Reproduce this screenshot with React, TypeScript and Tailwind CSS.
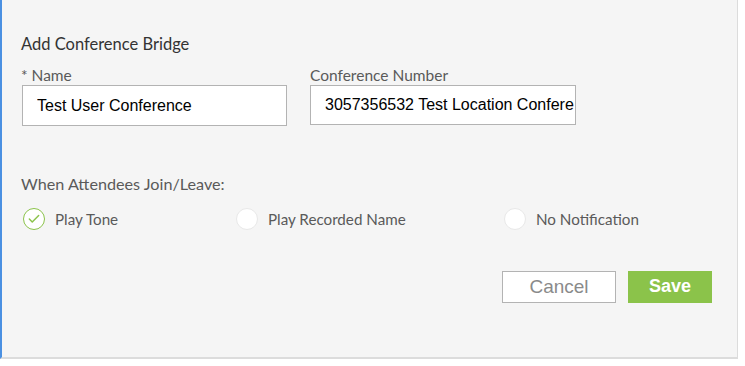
import { Check } from "lucide-react";

// ─── Radio option ─────────────────────────────────────────────

function RadioOption({ label, checked, width }: { label: string; checked?: boolean; width: string }) {
  return (
    <label className={`flex items-center gap-[10px] ${width}`}>
      <span
        className={
          checked
            ? "w-[22px] h-[22px] rounded-full border border-[#8bc34a] bg-white flex items-center justify-center"
            : "w-[22px] h-[22px] rounded-full border border-[#e8e8e8] bg-white"
        }
      >
        {checked && <Check className="w-[14px] h-[14px] text-[#8bc34a]" strokeWidth={2.5} />}
      </span>
      <span className="text-[15.2px] text-[#5a5a5a]">{label}</span>
    </label>
  );
}

export default function App() {
  return (
    <div className="w-[745px] h-[366px] bg-white font-['Lato',sans-serif]">
      <div className="w-[738px] h-[359px] bg-[#f5f5f5] border-l-2 border-l-[#4a90e2] border-r border-r-[#dcdcdc] border-b-2 border-b-[#dcdcdc] pt-[33px] pl-[19px] pr-[25px]">
        <h2 className="text-[16.5px] text-[#333] leading-[22px]">Add Conference Bridge</h2>

        {/* ── Fields ── */}
        <div className="flex gap-[24px] mt-[11px]">
          <div className="w-[265px]">
            <p className="text-[15.5px] text-[#5a5a5a] leading-[18px]">* Name</p>
            <input
              readOnly
              value="Test User Conference"
              className="mt-[1px] ml-[1px] w-[265px] h-[41px] bg-white border border-[#b3b3b3] px-[14px] text-[16px] text-black font-['Liberation_Sans',Arial,sans-serif] outline-none"
            />
          </div>
          <div className="w-[266px]">
            <p className="text-[15.5px] text-[#5a5a5a] leading-[18px]">Conference Number</p>
            <input
              readOnly
              value="3057356532 Test Location Conference"
              className="mt-[1px] w-[266px] h-[40px] bg-white border border-[#b3b3b3] pl-[14px] pr-[1px] text-[16px] text-black font-['Liberation_Sans',Arial,sans-serif] outline-none"
            />
          </div>
        </div>

        {/* ── Notification option ── */}
        <p className="mt-[49px] text-[16.2px] text-[#5a5a5a] leading-[18px]">When Attendees Join/Leave:</p>
        <div className="flex mt-[15px] ml-[2px]">
          <RadioOption label="Play Tone" checked width="w-[213px]" />
          <RadioOption label="Play Recorded Name" width="w-[268px]" />
          <RadioOption label="No Notification" width="w-[180px]" />
        </div>

        {/* ── Actions ── */}
        <div className="flex justify-end gap-[12px] mt-[40px]">
          <button className="w-[114px] h-[32px] bg-white border border-[#b3b3b3] text-[19px] text-[#8a8a8a] font-['Liberation_Sans',Arial,sans-serif]">
            Cancel
          </button>
          <button className="w-[84px] h-[32px] bg-[#8bc34a] text-[18px] font-bold text-white font-['Liberation_Sans',Arial,sans-serif]">
            Save
          </button>
        </div>
      </div>
    </div>
  );
}
